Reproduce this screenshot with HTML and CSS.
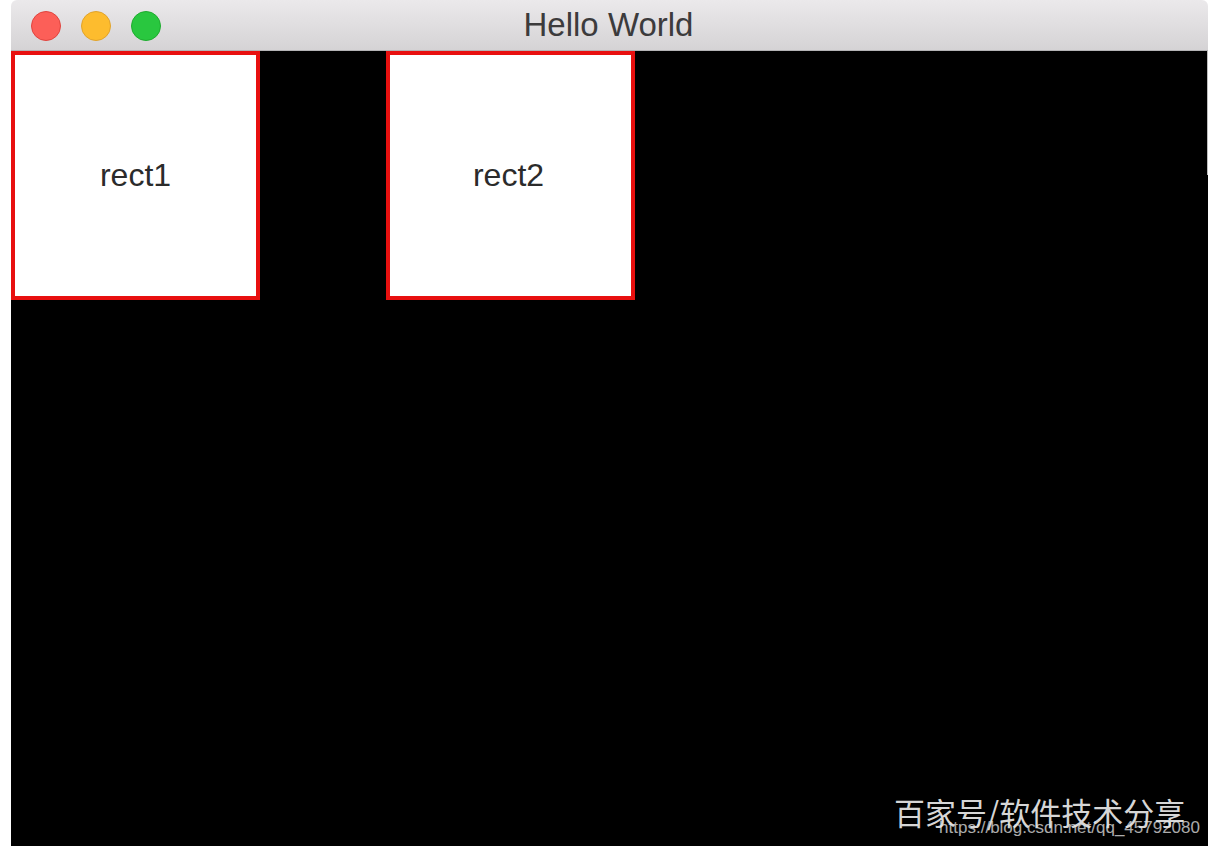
FILE: index.html
```html
<!DOCTYPE html>
<html lang="zh">
<head>
<meta charset="utf-8">
<title>Hello World</title>
<link rel="stylesheet" href="styles.css">
</head>
<body>
<div class="window">
  <div class="titlebar">
    <div class="lights">
      <span class="light red"></span>
      <span class="light yellow"></span>
      <span class="light green"></span>
    </div>
    <div class="title">Hello World</div>
  </div>
  <div class="content">
    <div class="rects">
      <div class="rect">rect1</div>
      <div class="rect rect-b">rect2</div>
    </div>
    <div class="edge"></div>
    <div class="watermark">
      <span class="wm-cn">百家号/软件技术分享</span>
      <span class="wm-url">https://blog.csdn.net/qq_45792080</span>
    </div>
  </div>
</div>
</body>
</html>
```
FILE: styles.css
```css
html, body {
  margin: 0;
  padding: 0;
  background: #ffffff;
  height: 846px;
  overflow: hidden;
}
.window {
  margin-left: 11px;
  width: 1197px;
  height: 846px;
  display: flex;
  flex-direction: column;
  font-family: "Liberation Sans", Arial, sans-serif;
}
.titlebar {
  height: 50px;
  flex: none;
  border-bottom: 1px solid #b4b3b5;
  background: linear-gradient(#ebe9eb, #d5d3d5);
  border-radius: 6px 6px 0 0;
  display: flex;
  align-items: center;
  position: relative;
}
.lights {
  display: flex;
  gap: 20px;
  padding-left: 20px;
  padding-top: 2px;
}
.light {
  width: 28px;
  height: 28px;
  border-radius: 50%;
  display: block;
}
.red { background: #fc5f58; border: 1px solid #e0443e; }
.yellow { background: #fdbc2e; border: 1px solid #e1a32b; }
.green { background: #29c73f; border: 1px solid #1eac2e; }
.title {
  position: absolute;
  left: 0;
  right: 0;
  top: 6px;
  text-align: center;
  font-size: 33px;
  color: #3c3b3c;
  padding-right: 2px;
}
.content {
  flex: 1;
  background: #000000;
  position: relative;
}
.rects {
  display: flex;
  gap: 126px;
}
.rect {
  width: 241px;
  height: 241px;
  border: 4px solid #e8100f;
  background: #ffffff;
  display: flex;
  align-items: center;
  justify-content: center;
  font-size: 32px;
  color: #2b2b2b;
  box-sizing: content-box;
}
.rect-b {
  width: 237px;
  padding-right: 4px;
}
.edge {
  position: absolute;
  right: 0;
  top: 0;
  width: 1px;
  height: 124px;
  background: #bdbdbd;
}
.watermark {
  position: absolute;
  right: 8px;
  bottom: 2px;
  width: 310px;
  height: 50px;
}
.wm-cn {
  position: absolute;
  left: 4px;
  top: 0;
  font-family: "Noto Sans CJK SC", sans-serif;
  font-size: 31px;
  line-height: 36px;
  color: #d6d6d6;
  white-space: nowrap;
}
.wm-url {
  position: absolute;
  right: 0;
  top: 24px;
  font-family: "Liberation Sans", Arial, sans-serif;
  font-size: 17px;
  color: rgba(230, 230, 230, 0.75);
  white-space: nowrap;
}
```
